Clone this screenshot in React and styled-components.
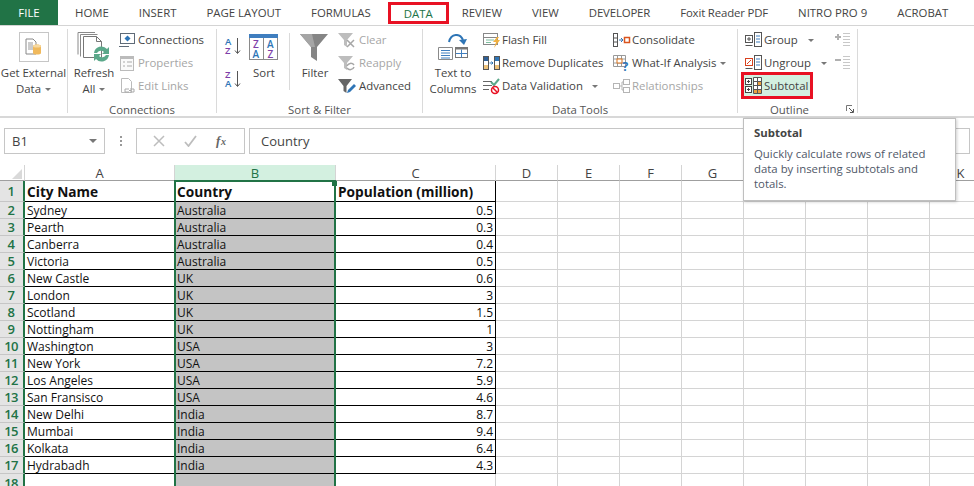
import React from 'react';
import styled, { createGlobalStyle } from 'styled-components';

const GlobalStyle = createGlobalStyle`
  html, body {
    margin: 0;
    padding: 0;
    background: #fff;
    overflow: hidden;
  }
  *, *::before, *::after { box-sizing: border-box; }
`;

const GREEN = '#217346';
const RED = '#e81123';

const Page = styled.div`
  position: relative;
  width: 974px;
  height: 486px;
  overflow: hidden;
  font-family: 'Open Sans', 'Liberation Sans', sans-serif;
  font-size: 11.4px;
  color: #444;
`;

const TabBar = styled.div`
  display: flex;
  height: 26px;
  border-bottom: 1px solid #d4d4d4;
`;

const FileTab = styled.div`
  flex: none;
  width: 58px;
  height: 25px;
  background: ${GREEN};
  color: #fff;
  display: flex;
  align-items: center;
  justify-content: center;
  margin-right: 2px;
`;

const Tab = styled.div`
  flex: none;
  display: flex;
  align-items: center;
  white-space: nowrap;
  padding: 0 15px;
  letter-spacing: ${(p) => (p.tight ? '-0.15px' : 'normal')};
  ${(p) =>
    p.active &&
    `
    color: ${GREEN};
    height: 22px;
    margin: 2px -2px 0 2px;
    padding: 0 13px;
    border: 3px solid ${RED};
  `}
`;

const Ribbon = styled.div`
  display: flex;
  height: 92px;
  padding-top: 3px;
  border-bottom: 2px solid #d8d8d8;
`;

const Group = styled.div`
  flex: none;
  width: ${(p) => p.width}px;
  height: 84px;
  border-right: 1px solid #dadada;
`;

const GroupBody = styled.div`
  display: flex;
  height: 74px;
  padding-left: ${(p) => p.pad || 0}px;
`;

const GroupLabel = styled.div`
  position: relative;
  height: 10px;
  line-height: 13px;
  text-align: center;
  color: #555;
  padding-right: ${(p) => p.shift || 0}px;
`;

const Launcher = styled.svg`
  position: absolute;
  right: 3px;
  top: 2px;
`;

const LargeButton = styled.div`
  width: ${(p) => p.width}px;
  margin-right: ${(p) => p.gap || 0}px;
  display: flex;
  flex-direction: column;
  align-items: center;
  flex: none;
`;

const LargeIcon = styled.div`
  height: 36px;
  display: flex;
  align-items: center;
  justify-content: center;
`;

const LargeText = styled.div`
  line-height: 16px;
  text-align: center;
  white-space: nowrap;
`;

const IconFrame = styled.div`
  width: 30px;
  height: 30px;
  border: 1px solid #c6c6c6;
  display: flex;
  align-items: center;
  justify-content: center;
`;

const Caret = styled.span`
  display: inline-block;
  width: 0;
  height: 0;
  margin-left: ${(p) => p.gap || 4}px;
  vertical-align: 2px;
  border-left: 3px solid transparent;
  border-right: 3px solid transparent;
  border-top: 3px solid #777;
`;

const SmallColumn = styled.div`
  width: ${(p) => p.width}px;
  margin-top: -1px;
  flex: none;
  display: flex;
  flex-direction: column;
`;

const SmallRow = styled.div`
  position: relative;
  height: 23px;
  display: flex;
  align-items: center;
  white-space: nowrap;
  color: ${(p) => (p.disabled ? '#a6a6a6' : '#444')};
  ${(p) =>
    p.active &&
    `
    &::before {
      content: '';
      position: absolute;
      left: -4px;
      top: -2px;
      width: 72px;
      height: 27px;
      background: #d3f0e0;
      border: 3px solid ${RED};
    }
  `}
`;

const SmallIcon = styled.svg`
  position: relative;
  flex: none;
  margin-right: 2px;
`;

const SmallText = styled.span`
  position: relative;
`;

const SortColumn = styled.div`
  width: 16px;
  margin-right: 8px;
  padding-top: 8px;
  flex: none;
  display: flex;
  flex-direction: column;
  gap: 15px;
`;

const VSep = styled.div`
  width: 1px;
  height: 57px;
  margin: 4px 10px 0 0;
  background: #dadada;
  flex: none;
`;

const FormulaBar = styled.div`
  display: flex;
  align-items: stretch;
  height: 47px;
  padding: 10px 4px 11px 4px;
`;

const NameBox = styled.div`
  width: 101px;
  border: 1px solid #c6c6c6;
  display: flex;
  align-items: center;
  justify-content: space-between;
  padding: 0 7px;
  font-size: 13px;
`;

const NameArrow = styled.span`
  border-left: 4px solid transparent;
  border-right: 4px solid transparent;
  border-top: 4px solid #777;
`;

const Dots = styled.div`
  width: 31px;
  display: flex;
  flex-direction: column;
  align-items: center;
  justify-content: center;
  gap: 2px;
  span {
    width: 2px;
    height: 2px;
    background: #999;
  }
`;

const FxBox = styled.div`
  width: 109px;
  margin-right: 4px;
  border: 1px solid #c6c6c6;
  display: flex;
  align-items: center;
  justify-content: space-around;
  padding: 0 6px;
`;

const FormulaInput = styled.div`
  flex: 1;
  border: 1px solid #c6c6c6;
  display: flex;
  align-items: center;
  padding-left: 11px;
  font-size: 13px;
`;

const Sheet = styled.div`
  position: relative;
  display: grid;
  grid-template-columns: 25px 150px 161px 160px repeat(8, 62px);
  grid-template-rows: 16px 21px repeat(16, 17px) 18px;
  width: 1016px;
`;

const Corner = styled.div`
  border-bottom: 1px solid #9f9f9f;
  border-right: 1px solid #d4d4d4;
  display: flex;
  align-items: flex-end;
  justify-content: flex-end;
  padding: 0 2px 1px 0;
`;

const ColHead = styled.div`
  display: flex;
  align-items: center;
  justify-content: center;
  font-size: 13px;
  line-height: 16px;
  border-bottom: 1px solid #9f9f9f;
  border-right: 1px solid #d4d4d4;
  color: ${(p) => (p.selected ? GREEN : '#444')};
  background: ${(p) => (p.selected ? '#d3f0e0' : '#fff')};
`;

const RowHead = styled.div`
  display: flex;
  align-items: center;
  justify-content: center;
  padding-right: 1px;
  background: #e4e4e4;
  color: ${GREEN};
  font-size: 13px;
  font-weight: 600;
  letter-spacing: -0.6px;
  border-right: 2px solid ${GREEN};
  border-bottom: 1px solid #c6c6c6;
`;

const Cell = styled.div`
  display: flex;
  align-items: center;
  justify-content: ${(p) => (p.number ? 'flex-end' : 'flex-start')};
  padding: 0 2px;
  white-space: nowrap;
  color: #111;
  font-size: ${(p) => (p.header ? '13.7px' : '12px')};
  font-weight: ${(p) => (p.header ? 700 : 400)};
  background: ${(p) => (p.shaded ? '#c4c4c4' : '#fff')};
  border-right: 1px solid ${(p) => (p.table ? '#000' : '#d4d4d4')};
  border-bottom: 1px solid ${(p) => (p.table ? '#000' : '#d4d4d4')};
`;

const SelectionFrame = styled.div`
  position: absolute;
  left: 174px;
  top: 15px;
  width: 162px;
  height: 320px;
  border: 2px solid ${GREEN};
  border-bottom: none;
`;

const FillHandle = styled.div`
  position: absolute;
  right: -3px;
  top: -1px;
  width: 5px;
  height: 5px;
  background: ${GREEN};
`;

const Tooltip = styled.div`
  position: absolute;
  left: 743px;
  top: 118px;
  width: 213px;
  height: 83px;
  padding: 6px 10px;
  background: #fff;
  border: 1px solid #bfbfbf;
  box-shadow: 1px 1px 3px rgba(0, 0, 0, 0.2);
  line-height: 15px;
  color: #505868;
`;

const TooltipTitle = styled.div`
  font-weight: 700;
  color: #444;
  margin-bottom: 6px;
`;

const Small = ({ children, w = 17, h = 16 }) => (
  <SmallIcon width={w} height={h} viewBox={`0 0 ${w} ${h}`} overflow="visible">
    {children}
  </SmallIcon>
);

const GetDataIcon = () => (
  <svg width="20" height="20" viewBox="0 0 20 20">
    <path d="M2 2h7l3 3v12H2z" fill="#fff" stroke="#888" />
    <path d="M4 6h5M4 8h5M4 10h5M4 12h5" stroke="#999" />
    <path d="M9 9c0-2 8-2 8 0v7c0 2-8 2-8 0z" fill="#f0b95c" />
    <ellipse cx="13" cy="9" rx="4" ry="1.5" fill="#f7d9a0" />
  </svg>
);

const RefreshIcon = () => (
  <svg width="34" height="30" viewBox="0 0 34 30">
    <path d="M1 .5h17M1 .5v22M3.5 2.5h17M3.500 2.500v22" fill="none" stroke="#8a8a8a" />
    <path d="M6.5 4.5h13l5 5v16h-18z" fill="#fff" stroke="#777" />
    <path d="M19.5 4.5v5h5" fill="none" stroke="#777" />
    <path d="M17 21a7.5 7.5 0 0 1 13-4l2-2v7h-7l2-2a4.5 4.5 0 0 0-7 1z" fill="#5ba88a" />
    <path d="M32 23a7.5 7.5 0 0 1-13 4l-2 2v-7h7l-2 2a4.5 4.5 0 0 0 7-1z" fill="#5ba88a" />
  </svg>
);

const ConnectionsIcon = () => (
  <Small>
    <rect x="1.5" y="1.5" width="14" height="10" fill="#fff" stroke="#5f6b78" />
    <path d="M8.5 3.5l3 3-3 3-3-3z" fill="#2e75b6" />
    <path d="M0 14.5h10" stroke="#5f6b78" />
  </Small>
);

const PropertiesIcon = () => (
  <Small>
    <rect x="1.5" y="1.5" width="13" height="14" fill="#fafafa" stroke="#bbb" />
    <rect x="1" y="1" width="14" height="3" fill="#bbb" />
    <path d="M4 7h2M4 11h2M8 7h5M8 11h5" stroke="#aaa" />
  </Small>
);

const EditLinksIcon = () => (
  <Small>
    <path d="M2.5 .5h7l3 3v11h-10z" fill="#fff" stroke="#bbb" />
    <path d="M6 11h4M11 11h4M6 14h4M11 14h4M6 11v3M15 11v3M10 12.5h2" stroke="#aaa" fill="none" />
  </Small>
);

const SortLetters = ({ top, bottom, topFill, bottomFill }) => (
  <svg width="16" height="18" viewBox="0 0 16 18" overflow="visible" fontFamily="Open Sans, sans-serif" fontSize="9.5" fontWeight="600">
    <text x="0" y="8" fill={topFill}>{top}</text>
    <text x="0" y="16.500" fill={bottomFill}>{bottom}</text>
    <path d="M12.500 1v15M10 13.500l2.500 3 2.500-3" fill="none" stroke="#555" />
  </svg>
);

const SortIcon = () => (
  <svg width="30" height="26" viewBox="0 0 30 26" fontFamily="Open Sans, sans-serif" fontSize="10" fontWeight="600">
    <rect x=".5" y=".5" width="28" height="25" fill="#fff" stroke="#8a8a8a" />
    <rect x="0" y="0" width="29" height="4" fill="#3f7ebf" />
    <path d="M14.5 4v21" stroke="#8a8a8a" />
    <text x="4" y="14" fill="#7e3fa8">Z</text>
    <text x="18" y="14" fill="#2e75b6">A</text>
    <text x="3.5" y="24" fill="#2e75b6">A</text>
    <text x="18.5" y="24" fill="#7e3fa8">Z</text>
  </svg>
);

const FilterIcon = () => (
  <svg width="30" height="27" viewBox="0 0 30 27">
    <path d="M0 0h28L17 13v14l-6-4V13z" fill="#858585" />
    <path d="M0 0h12l3 13h-4z" fill="#a5a5a5" />
  </svg>
);

const ClearIcon = () => (
  <Small w={19}>
    <path d="M0 1h15L9 8v7L6 13V8z" fill="#bdbdbd" />
    <path d="M9 8l7 7M16 8l-7 7" stroke="#a6a6a6" strokeWidth="1.5" />
  </Small>
);

const ReapplyIcon = () => (
  <Small w={19}>
    <path d="M0 1h15L9 8v7L6 13V8z" fill="#bdbdbd" />
    <path d="M9 11a4 4 0 0 1 7-1M16 12a4 4 0 0 1-7 1" fill="none" stroke="#a6a6a6" strokeWidth="1.5" />
  </Small>
);

const AdvancedIcon = () => (
  <Small w={19}>
    <path d="M0 1h14L8.5 8v7l-3-2V8z" fill="#666" />
    <path d="M9 15l1-3 6-6 2 2-6 6z" fill="#2e75b6" />
  </Small>
);

const TextColumnsIcon = () => (
  <svg width="32" height="26" viewBox="0 0 32 26">
    <path d="M1.500 13.500h14v12h-14z" fill="#fff" stroke="#8a8a8a" />
    <path d="M4 16.500h9M4 19h9M4 21.500h9M4 24h9" stroke="#3f7ebf" />
    <rect x="18.500" y="13.500" width="12" height="10" fill="#fff" stroke="#777" />
    <rect x="18" y="13" width="13" height="2.500" fill="#777" />
    <path d="M24.500 15.500v8M19 19.500h11" stroke="#3f7ebf" />
    <path d="M12 8c2-9 11-9 14-2" fill="none" stroke="#2e75b6" strokeWidth="2" />
    <path d="M22 6l5 5 3-6z" fill="#2e75b6" />
  </svg>
);

const FlashFillIcon = () => (
  <Small>
    <rect x=".5" y="1.500" width="14" height="11" fill="#fff" stroke="#888" />
    <path d="M.5 5.500h14" stroke="#888" />
    <path d="M3 8h8M3 10.500h5" stroke="#7fbfa0" strokeWidth="1.200" />
    <path d="M14 5l-4 5h3l-2 6 6-8h-3l2-3z" fill="#f0b040" />
  </Small>
);

const RemoveDupIcon = () => (
  <Small>
    <rect x=".5" y="1.500" width="5" height="13" fill="#fff" stroke="#555" />
    <rect x="11.500" y="1.500" width="5" height="13" fill="#fff" stroke="#555" />
    <path d="M1 2h4v4H1z" fill="#2e5f96" />
    <path d="M1 6.500h4v3H1z" fill="#fff" />
    <path d="M1 10h4v4H1z" fill="#eec27a" />
    <path d="M12 2h4v4h-4z" fill="#2e75b6" />
    <path d="M12 10h4v4h-4z" fill="#eec27a" />
    <path d="M6.500 8h3.500M8.500 6.500l1.500 1.500-1.500 1.500" fill="none" stroke="#2e75b6" />
  </Small>
);

const ValidationIcon = () => (
  <Small>
    <path d="M0 3.500h9M0 7.500h9M0 11.500h6" stroke="#666" />
    <path d="M8 4l3 3 5-6" fill="none" stroke="#5ba88a" strokeWidth="2" />
    <circle cx="12" cy="12" r="3.500" fill="#fff" stroke={RED} strokeWidth="1.500" />
    <path d="M9.500 9.500l5 5" stroke={RED} strokeWidth="1.500" />
  </Small>
);

const ConsolidateIcon = () => (
  <Small>
    <rect x=".5" y="1.500" width="4" height="13" fill="#fff" stroke="#555" />
    <path d="M1 6h4M1 10h4" stroke="#555" />
    <path d="M6 8h4M8 6l2 2-2 2" fill="none" stroke="#2e75b6" />
    <rect x="11.500" y="5.500" width="5" height="5" fill="#fff" stroke="#d9541e" strokeWidth="1.500" />
  </Small>
);

const WhatIfIcon = () => (
  <Small w={17}>
    <path d="M.5 .5h12v11h-12zM.5 4h12M.5 8h12M4.500 .5v11M8.500 .5v11" fill="#fff" stroke="#999" />
    <rect x="4" y="4" width="5" height="4" fill="#fff" stroke="#d9741e" />
    <text x="9.500" y="15.500" fontSize="12" fontWeight="700" fill="#2e75b6" fontFamily="Open Sans, sans-serif">?</text>
  </Small>
);

const RelationIcon = () => (
  <Small>
    <rect x=".5" y="5.500" width="6" height="5" fill="#fff" stroke="#b5b5b5" />
    <rect x="10.500" y="1.500" width="6" height="5" fill="#fff" stroke="#b5b5b5" />
    <rect x="10.500" y="9.500" width="6" height="5" fill="#fff" stroke="#b5b5b5" />
    <path d="M7 8h2M9 4v8M9 4h1M9 12h1" fill="none" stroke="#b5b5b5" />
  </Small>
);

const GroupIcon = ({ broken }) => (
  <Small>
    <rect x=".5" y="3.500" width="7" height="7" fill="#fff" stroke={broken ? '#d9411e' : '#555'} />
    {broken ? (
      <path d="M2 9l4-4" stroke="#d9411e" />
    ) : (
      <path d="M2 7h4M4 5v4" stroke="#555" />
    )}
    <path d="M.5 13.500h7" stroke="#555" />
    <rect x="9.500" y=".5" width="7" height="14" fill="#fff" stroke="#555" />
    <path d="M11 4h4M11 7h4M11 10h4" stroke="#3f7ebf" />
  </Small>
);

const SubtotalIcon = () => (
  <Small w={17} h={17}>
    <rect x=".5" y="1.500" width="6" height="6" fill="#fff" stroke="#444" />
    <rect x=".5" y="9.500" width="6" height="6" fill="#fff" stroke="#444" />
    <path d="M2 4.500h3M3.500 3v3M2 12.500h3M3.500 11v3" stroke="#444" />
    <path d="M8.500 .5h8v16h-8zM8.500 4.500h8M8.500 8.500h8M8.500 12.500h8M12.500 .5v16" fill="#fff" stroke="#555" />
    <path d="M13 5h3v3h-3zM13 13h3v3h-3zM9 13h3v3H9z" fill="#e8a040" />
  </Small>
);

const DetailIcon = ({ plus }) => (
  <svg width="16" height="16" viewBox="0 0 16 16">
    {plus ? (
      <path d="M0 5h6M3 2v6" stroke="#b0b0b0" strokeWidth="2" />
    ) : (
      <path d="M0 5h6" stroke="#b0b0b0" strokeWidth="2" />
    )}
    <path d="M8 1.500h7M8 4.500h7M8 7.500h7M8 10.500h7M8 13.500h7" stroke="#c8c8c8" />
  </svg>
);

const TABS = ['HOME', 'INSERT', 'PAGE LAYOUT', 'FORMULAS', 'DATA', 'REVIEW', 'VIEW', 'DEVELOPER', 'Foxit Reader PDF', 'NITRO PRO 9', 'ACROBAT'];
const TIGHT_TABS = ['DEVELOPER', 'Foxit Reader PDF'];

const ROWS = [
  ['Sydney', 'Australia', '0.5'],
  ['Pearth', 'Australia', '0.3'],
  ['Canberra', 'Australia', '0.4'],
  ['Victoria', 'Australia', '0.5'],
  ['New Castle', 'UK', '0.6'],
  ['London', 'UK', '3'],
  ['Scotland', 'UK', '1.5'],
  ['Nottingham', 'UK', '1'],
  ['Washington', 'USA', '3'],
  ['New York', 'USA', '7.2'],
  ['Los Angeles', 'USA', '5.9'],
  ['San Fransisco', 'USA', '4.6'],
  ['New Delhi', 'India', '8.7'],
  ['Mumbai', 'India', '9.4'],
  ['Kolkata', 'India', '6.4'],
  ['Hydrabadh', 'India', '4.3'],
];

const COLUMNS = ['A', 'B', 'C', 'D', 'E', 'F', 'G', 'H', 'I', 'J', 'K'];
const BLANKS = COLUMNS.slice(3);

const BlankCells = ({ row }) =>
  BLANKS.map((col) => <Cell key={`${col}${row}`} />);

const App = () => (
  <Page>
    <GlobalStyle />
    <TabBar>
      <FileTab>FILE</FileTab>
      {TABS.map((tab) => (
        <Tab key={tab} active={tab === 'DATA'} tight={TIGHT_TABS.includes(tab)}>
          {tab}
        </Tab>
      ))}
    </TabBar>

    <Ribbon>
      <Group width={68}>
        <GroupBody>
          <LargeButton width={67}>
            <LargeIcon>
              <IconFrame>
                <GetDataIcon />
              </IconFrame>
            </LargeIcon>
            <LargeText>Get External</LargeText>
            <LargeText>
              Data
              <Caret />
            </LargeText>
          </LargeButton>
        </GroupBody>
      </Group>

      <Group width={149}>
        <GroupBody pad={4}>
          <LargeButton width={44} gap={3}>
            <LargeIcon>
              <RefreshIcon />
            </LargeIcon>
            <LargeText>Refresh</LargeText>
            <LargeText>
              All
              <Caret />
            </LargeText>
          </LargeButton>
          <SmallColumn width={90}>
            <SmallRow>
              <ConnectionsIcon />
              <SmallText>Connections</SmallText>
            </SmallRow>
            <SmallRow disabled>
              <PropertiesIcon />
              <SmallText>Properties</SmallText>
            </SmallRow>
            <SmallRow disabled>
              <EditLinksIcon />
              <SmallText>Edit Links</SmallText>
            </SmallRow>
          </SmallColumn>
        </GroupBody>
        <GroupLabel>Connections</GroupLabel>
      </Group>

      <Group width={206}>
        <GroupBody pad={8}>
          <SortColumn>
            <SortLetters top="A" bottom="Z" topFill="#2e75b6" bottomFill="#7e3fa8" />
            <SortLetters top="Z" bottom="A" topFill="#7e3fa8" bottomFill="#2e75b6" />
          </SortColumn>
          <LargeButton width={30} gap={10}>
            <LargeIcon>
              <SortIcon />
            </LargeIcon>
            <LargeText>Sort</LargeText>
          </LargeButton>
          <VSep />
          <LargeButton width={30} gap={8}>
            <LargeIcon>
              <FilterIcon />
            </LargeIcon>
            <LargeText>Filter</LargeText>
          </LargeButton>
          <SmallColumn width={80}>
            <SmallRow disabled>
              <ClearIcon />
              <SmallText>Clear</SmallText>
            </SmallRow>
            <SmallRow disabled>
              <ReapplyIcon />
              <SmallText>Reapply</SmallText>
            </SmallRow>
            <SmallRow>
              <AdvancedIcon />
              <SmallText>Advanced</SmallText>
            </SmallRow>
          </SmallColumn>
        </GroupBody>
        <GroupLabel>Sort &amp; Filter</GroupLabel>
      </Group>

      <Group width={315}>
        <GroupBody pad={6}>
          <LargeButton width={48} gap={6}>
            <LargeIcon>
              <TextColumnsIcon />
            </LargeIcon>
            <LargeText>Text to</LargeText>
            <LargeText>Columns</LargeText>
          </LargeButton>
          <SmallColumn width={130}>
            <SmallRow>
              <FlashFillIcon />
              <SmallText>Flash Fill</SmallText>
            </SmallRow>
            <SmallRow>
              <RemoveDupIcon />
              <SmallText>Remove Duplicates</SmallText>
            </SmallRow>
            <SmallRow>
              <ValidationIcon />
              <SmallText>
                Data Validation
                <Caret gap={9} />
              </SmallText>
            </SmallRow>
          </SmallColumn>
          <SmallColumn width={115}>
            <SmallRow>
              <ConsolidateIcon />
              <SmallText>Consolidate</SmallText>
            </SmallRow>
            <SmallRow>
              <WhatIfIcon />
              <SmallText>
                What-If Analysis
                <Caret />
              </SmallText>
            </SmallRow>
            <SmallRow disabled>
              <RelationIcon />
              <SmallText>Relationships</SmallText>
            </SmallRow>
          </SmallColumn>
        </GroupBody>
        <GroupLabel>Data Tools</GroupLabel>
      </Group>

      <Group width={120}>
        <GroupBody pad={7}>
          <SmallColumn width={90}>
            <SmallRow>
              <GroupIcon />
              <SmallText>
                Group
                <Caret gap={10} />
              </SmallText>
            </SmallRow>
            <SmallRow>
              <GroupIcon broken />
              <SmallText>
                Ungroup
                <Caret gap={10} />
              </SmallText>
            </SmallRow>
            <SmallRow active>
              <SubtotalIcon />
              <SmallText>Subtotal</SmallText>
            </SmallRow>
          </SmallColumn>
          <SmallColumn width={16}>
            <SmallRow>
              <DetailIcon plus />
            </SmallRow>
            <SmallRow>
              <DetailIcon />
            </SmallRow>
          </SmallColumn>
        </GroupBody>
        <GroupLabel shift={16}>
          Outline
          <Launcher width="8" height="8" viewBox="0 0 8 8">
            <path d="M.5 6V.5H6" fill="none" stroke="#777" />
            <path d="M3 3l4 4M7.500 4v3.500H4" fill="none" stroke="#555" />
          </Launcher>
        </GroupLabel>
      </Group>
    </Ribbon>

    <FormulaBar>
      <NameBox>
        B1
        <NameArrow />
      </NameBox>
      <Dots>
        <span />
        <span />
        <span />
      </Dots>
      <FxBox>
        <svg width="12" height="12" viewBox="0 0 12 12">
          <path d="M1 1l10 10M11 1L1 11" stroke="#bdbdbd" strokeWidth="1.500" />
        </svg>
        <svg width="13" height="12" viewBox="0 0 13 12">
          <path d="M1 7l3.500 4L12 1" fill="none" stroke="#bdbdbd" strokeWidth="1.800" />
        </svg>
        <svg width="13" height="14" viewBox="0 0 13 14" overflow="visible" fontFamily="Liberation Serif, serif" fontStyle="italic" fontWeight="700">
          <text x="0" y="11" fontSize="13" fill="#666">f</text>
          <text x="5" y="11" fontSize="10" fill="#666">x</text>
        </svg>
      </FxBox>
      <FormulaInput>Country</FormulaInput>
    </FormulaBar>

    <Sheet>
      <Corner>
        <svg width="10" height="10" viewBox="0 0 10 10">
          <path d="M10 0v10H0z" fill="#d9d9d9" />
        </svg>
      </Corner>
      {COLUMNS.map((col) => (
        <ColHead key={col} selected={col === 'B'}>
          {col}
        </ColHead>
      ))}

      <RowHead>1</RowHead>
      <Cell table header>City Name</Cell>
      <Cell table header>Country</Cell>
      <Cell table header>Population (million)</Cell>
      <BlankCells row={1} />

      {ROWS.map(([city, country, population], i) => (
        <React.Fragment key={city}>
          <RowHead>{i + 2}</RowHead>
          <Cell table>{city}</Cell>
          <Cell table shaded>{country}</Cell>
          <Cell table number>{population}</Cell>
          <BlankCells row={i + 2} />
        </React.Fragment>
      ))}

      <RowHead>18</RowHead>
      <Cell />
      <Cell shaded />
      <Cell />
      <BlankCells row={18} />

      <SelectionFrame>
        <FillHandle />
      </SelectionFrame>
    </Sheet>

    <Tooltip>
      <TooltipTitle>Subtotal</TooltipTitle>
      Quickly calculate rows of related data by inserting subtotals and totals.
    </Tooltip>
  </Page>
);

export default App;
